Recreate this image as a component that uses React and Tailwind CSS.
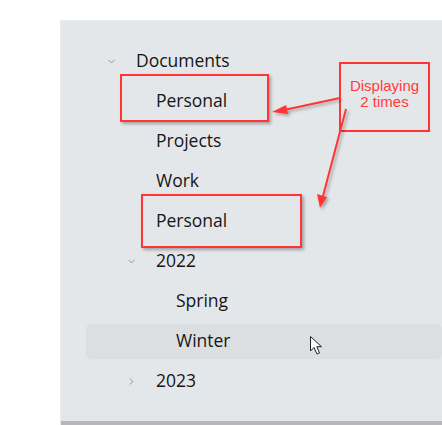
import { ChevronDown, ChevronRight } from "lucide-react";

const rows = [
  { label: "Documents", level: 0, toggle: "open" },
  { label: "Personal", level: 1 },
  { label: "Projects", level: 1 },
  { label: "Work", level: 1 },
  { label: "Personal", level: 1 },
  { label: "2022", level: 1, toggle: "open" },
  { label: "Spring", level: 2 },
  { label: "Winter", level: 2, hover: true },
  { label: "2023", level: 1, toggle: "closed" },
];

const indent = ["pl-[17px]", "pl-[37px]", "pl-[57px]"];

function TreeRow({ row }) {
  return (
    <div className="h-10 flex items-center">
      <div
        className={`h-[35px] w-full flex items-center rounded-[5px] ${indent[row.level]} ${
          row.hover ? "bg-[#dcdfe2]" : ""
        }`}
      >
        <span className="w-4 flex items-center justify-center text-[#7d8085]">
          {row.toggle === "open" && <ChevronDown size={11} strokeWidth={1.75} />}
          {row.toggle === "closed" && <ChevronRight size={11} strokeWidth={1.75} />}
        </span>
        <span className="ml-[17px] text-[17.5px] text-[#161616] leading-none">{row.label}</span>
      </div>
    </div>
  );
}

export default function App() {
  return (
    <div
      className="relative w-[442px] h-[425px] bg-white overflow-hidden"
      style={{ fontFamily: '"Open Sans", "Noto Sans", sans-serif' }}
    >
      <div className="absolute left-[60px] top-[20px] right-0 bottom-0 flex flex-col bg-[#e4e7ea] border-t border-l border-[#eaebec]">
        <div className="flex-1 pt-[20px] pl-[25px]">
          {rows.map((r, i) => (
            <TreeRow key={i} row={r} />
          ))}
        </div>
        <div className="h-[4px] bg-[#b8b6b9]" />
      </div>

      {/* annotation overlay */}
      <div className="absolute left-[120px] top-[74px] w-[149px] h-[48px] border-2 border-[#ff3535] shadow-[2px_2px_3px_rgba(0,0,0,0.3)]" />
      <div className="absolute left-[141px] top-[194px] w-[161px] h-[54px] border-2 border-[#ff3535] shadow-[2px_2px_3px_rgba(0,0,0,0.3)]" />
      <div
        className="absolute left-[339px] top-[62px] w-[91px] h-[70px] border-2 border-[#ff3535] flex flex-col items-center justify-center text-[15px] leading-[16px] text-[#ff3b3b] pb-[6px]"
        style={{ fontFamily: '"Liberation Sans", Arial, sans-serif' }}
      >
        <span>Displaying</span>
        <span>2 times</span>
      </div>

      <svg className="absolute inset-0 pointer-events-none" width="442" height="425">
        <defs>
          <filter id="sh" x="-20%" y="-20%" width="140%" height="140%">
            <feDropShadow dx="2" dy="2" stdDeviation="1.5" floodColor="#000" floodOpacity="0.3" />
          </filter>
        </defs>
        <g filter="url(#sh)" fill="#ff3535" stroke="#ff3535">
          <line x1="340" y1="98" x2="284" y2="110" strokeWidth="2" />
          <polygon points="272,112 286,105 288,114" strokeWidth="0" />
          <line x1="346" y1="109" x2="323" y2="196" strokeWidth="2" />
          <polygon points="320,208 317,194 327,197" strokeWidth="0" />
        </g>
        {/* mouse pointer */}
        <path
          d="M310.5 336.5 L310.5 351 L314 347.5 L317 354 L319.5 353 L316.8 346.7 L321.5 346.7 Z"
          fill="#fff"
          stroke="#222"
          strokeWidth="1"
          strokeLinejoin="round"
        />
      </svg>
    </div>
  );
}
